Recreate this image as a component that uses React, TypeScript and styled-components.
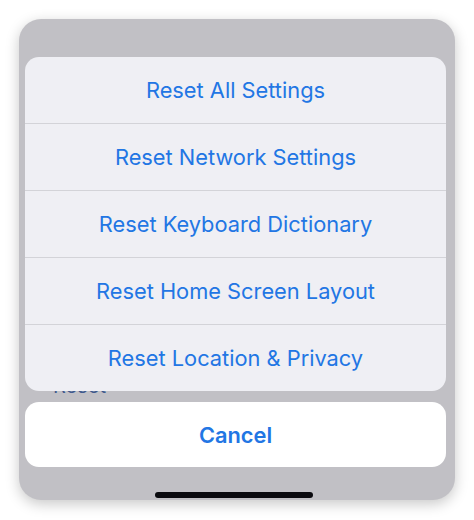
import React from 'react';
import styled, { createGlobalStyle } from 'styled-components';

const GlobalStyle = createGlobalStyle`
  html, body {
    margin: 0;
    padding: 0;
    background: #ffffff;
  }
  body {
    font-family: Inter, "Liberation Sans", Arial, sans-serif;
  }
`;

const Page = styled.div`
  width: 474px;
  height: 520px;
  padding: 19px 0 0 19px;
  box-sizing: border-box;
`;

const Frame = styled.div`
  position: relative;
  width: 436px;
  height: 481px;
  box-sizing: border-box;
  padding: 38px 9px 0 6px;
  background: #c1c0c5;
  border-radius: 22px;
  box-shadow: 0 4px 14px rgba(0, 0, 0, 0.22);
  display: flex;
  flex-direction: column;
  align-items: stretch;
`;

// label of the list row that sits under the action sheet
const BehindLabel = styled.span`
  position: absolute;
  top: 357px;
  left: 34px;
  font-size: 20px;
  line-height: 20px;
  color: #3f5a8e;
  z-index: 0;
`;

const Sheet = styled.div`
  position: relative;
  z-index: 1;
  background: #efeff4;
  border-radius: 14px;
  overflow: hidden;
  display: flex;
  flex-direction: column;
`;

const Action = styled.div<{ last?: boolean }>`
  height: 66px;
  display: flex;
  align-items: center;
  justify-content: center;
  font-size: 21.8px;
  color: #2276e4;
  border-bottom: ${p => (p.last ? 'none' : '1px solid #d3d3d8')};
`;

const CancelButton = styled.div`
  position: relative;
  z-index: 1;
  margin-top: 11px;
  height: 65px;
  background: #ffffff;
  border-radius: 14px;
  display: flex;
  align-items: center;
  justify-content: center;
  font-size: 21.8px;
  font-weight: 600;
  color: #2276e4;
`;

const HomeIndicator = styled.div`
  align-self: center;
  margin-top: 25px;
  margin-left: -3px;
  width: 158px;
  height: 6px;
  border-radius: 3px;
  background: #0a0a0f;
`;

const actions = [
  'Reset All Settings',
  'Reset Network Settings',
  'Reset Keyboard Dictionary',
  'Reset Home Screen Layout',
  'Reset Location & Privacy',
];

const App: React.FC = () => {
  return (
    <Page>
      <GlobalStyle />
      <Frame>
        <BehindLabel>Reset</BehindLabel>
        <Sheet>
          {actions.map((a, i) => (
            <Action key={a} last={i === actions.length - 1}>
              {a}
            </Action>
          ))}
        </Sheet>
        <CancelButton>Cancel</CancelButton>
        <HomeIndicator />
      </Frame>
    </Page>
  );
};

export default App;
